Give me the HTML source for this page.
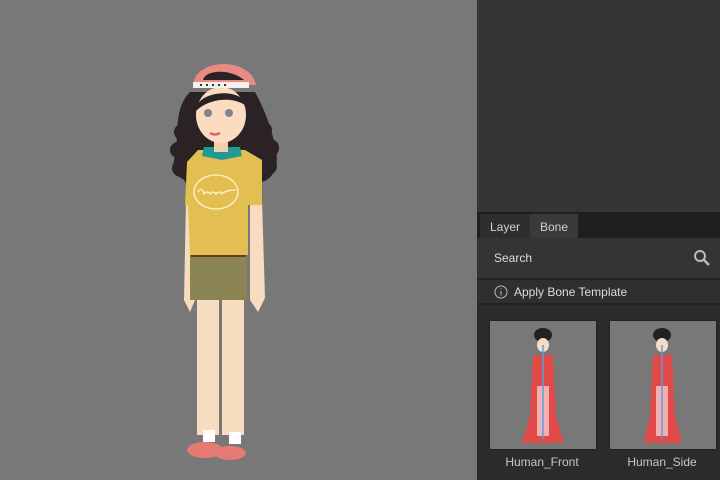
<!DOCTYPE html>
<html><head><meta charset="utf-8"><style>
html,body{margin:0;width:720px;height:480px;overflow:hidden}
body{background:#777;font-family:"Liberation Sans",sans-serif;position:relative}
.canvas{position:absolute;left:0;top:0;width:477px;height:480px;background:#787878}
.panel{position:absolute;left:477px;top:0;width:243px;height:480px;background:#2b2b2b}
.top{position:absolute;left:0;top:0;width:243px;height:212px;background:#353535}
.tabs{position:absolute;left:0;top:212px;width:243px;height:26px;background:#1f1f1f}
.tab{position:absolute;top:2px;height:24px;line-height:26px;color:#d0d0d0;font-size:12px;text-align:center}
.search{position:absolute;left:0;top:238px;width:243px;height:40px;background:#343434;border-bottom:2px solid #262626}
.apply{position:absolute;left:0;top:280px;width:243px;height:23px;background:#2f2f2f;border-bottom:2px solid #222}
.thumb{position:absolute;top:320px;width:106px;height:128px;background:#787878;border:1px solid #222}
.lbl{position:absolute;top:455px;color:#c8c8c8;font-size:12px;text-align:center;width:120px}
</style></head><body>
<div class="canvas">
<svg width="477" height="480" viewBox="0 0 477 480">
 <g fill="#2a2224">
 <path d="M190 92 C172 110 180 140 174 160 C172 176 185 184 200 182 L250 182 C270 186 280 170 276 150 C272 130 265 110 255 92 Z"/>
 <circle cx="182" cy="132" r="8"/><circle cx="178" cy="150" r="8"/><circle cx="181" cy="168" r="9"/><circle cx="192" cy="178" r="8"/>
 <circle cx="264" cy="130" r="8"/><circle cx="270" cy="148" r="9"/><circle cx="268" cy="166" r="9"/><circle cx="255" cy="178" r="8"/>
 </g>
 <rect x="197" y="295" width="22" height="140" fill="#f7dcc0"/>
 <rect x="222" y="295" width="22" height="140" fill="#f7dcc0"/>
 <rect x="203" y="430" width="12" height="12" fill="#fff"/>
 <rect x="229" y="432" width="12" height="12" fill="#fff"/>
 <ellipse cx="205" cy="450" rx="18" ry="8" fill="#e57a73"/>
 <ellipse cx="230" cy="453" rx="16" ry="7" fill="#e57a73"/>
 <path d="M186 200 L184 300 L190 312 L195 300 L196 200 Z" fill="#f7dcc0"/>
 <path d="M250 200 L250 300 L258 312 L265 298 L262 200 Z" fill="#f7dcc0"/>
 <rect x="190" y="252" width="57" height="48" fill="#8a8553"/>
 <rect x="191" y="253" width="55" height="4" fill="#6b3a2a"/>
 <path d="M198 150 L245 150 L262 160 L262 205 L248 205 L248 255 L190 255 L188 205 L185 205 L187 162 Z" fill="#e2bf50"/>
 <ellipse cx="216" cy="192" rx="22" ry="17" fill="none" stroke="#fff4d0" stroke-width="1.3"/>
 <path d="M198 192 q4 -6 6 2 q3 -4 6 0 q3 -4 6 0 q3 -4 6 0 q4 -4 14 -4" fill="none" stroke="#fff4d0" stroke-width="1.2"/>
 <path d="M204 147 L240 147 L242 156 L222 160 L202 156 Z" fill="#1f9a96"/>
 <rect x="214" y="136" width="14" height="16" fill="#f2cfae"/>
 <ellipse cx="221" cy="115" rx="25" ry="28" fill="#fbdcc0"/>
 <path d="M195 112 C195 90 245 85 250 110 C240 96 210 96 195 112 Z" fill="#2a2224"/>
 <circle cx="208" cy="113" r="4" fill="#7b8590"/>
 <circle cx="229" cy="113" r="4" fill="#7b8590"/>
 <path d="M210 133 q5 3 10 0" stroke="#e0646c" stroke-width="2.5" fill="none"/>
 <path d="M193 85 C195 58 250 56 256 85 Z" fill="#ea8a82"/>
 <path d="M203 80 C205 70 230 68 244 80 Z" fill="#2a2224"/>
 <rect x="193" y="82" width="56" height="6" fill="#f4f0ee"/>
 <g fill="#333"><rect x="200" y="84" width="2" height="2"/><rect x="206" y="84" width="2" height="2"/><rect x="212" y="84" width="2" height="2"/><rect x="218" y="84" width="2" height="2"/><rect x="224" y="84" width="2" height="2"/></g>
</svg>
</div>
<div class="panel">
 <div class="top"></div>
 <div class="tabs">
  <div class="tab" style="left:3px;width:50px;background:#2e2e2e">Layer</div>
  <div class="tab" style="left:53px;width:48px;background:#3a3a3a">Bone</div>
 </div>
 <div class="search"><span style="position:absolute;left:17px;top:13px;color:#ddd;font-size:12px">Search</span>
  <svg style="position:absolute;left:216px;top:11px" width="18" height="18"><circle cx="7" cy="7" r="5" fill="none" stroke="#bbb" stroke-width="2"/><path d="M11 11 L16 16" stroke="#bbb" stroke-width="2.5"/></svg></div>
 <div class="apply">
  <svg style="position:absolute;left:17px;top:5px" width="14" height="14"><circle cx="7" cy="7" r="6" fill="none" stroke="#bbb"/><rect x="6.5" y="6" width="1" height="4.5" fill="#bbb"/><rect x="6.5" y="3.5" width="1" height="1" fill="#bbb"/></svg>
  <span style="position:absolute;left:37px;top:5px;color:#ddd;font-size:12px">Apply Bone Template</span></div>
 <div class="thumb" style="left:12px">
  <svg width="106" height="128"><ellipse cx="53" cy="14" rx="9" ry="7" fill="#222"/><ellipse cx="53" cy="24" rx="6" ry="7" fill="#f4dcc8"/><path d="M43 34 L63 34 L66 95 L74 122 L32 122 L40 95 Z" fill="#e04a48"/><rect x="47" y="65" width="12" height="50" fill="#f2b0b0"/><path d="M53 24 V118" stroke="#5aa0e0" stroke-width="1.5"/></svg></div>
 <div class="thumb" style="left:132px">
  <svg width="106" height="128"><ellipse cx="52" cy="14" rx="9" ry="7" fill="#222"/><ellipse cx="52" cy="24" rx="6" ry="7" fill="#f4dcc8"/><path d="M43 34 L62 34 L65 95 L72 122 L34 122 L40 95 Z" fill="#e04a48"/><rect x="46" y="65" width="12" height="50" fill="#f2b0b0"/><path d="M52 24 V118" stroke="#5aa0e0" stroke-width="1.5"/></svg></div>
 <div class="lbl" style="left:5px">Human_Front</div>
 <div class="lbl" style="left:125px">Human_Side</div>
</div>
</body></html>
